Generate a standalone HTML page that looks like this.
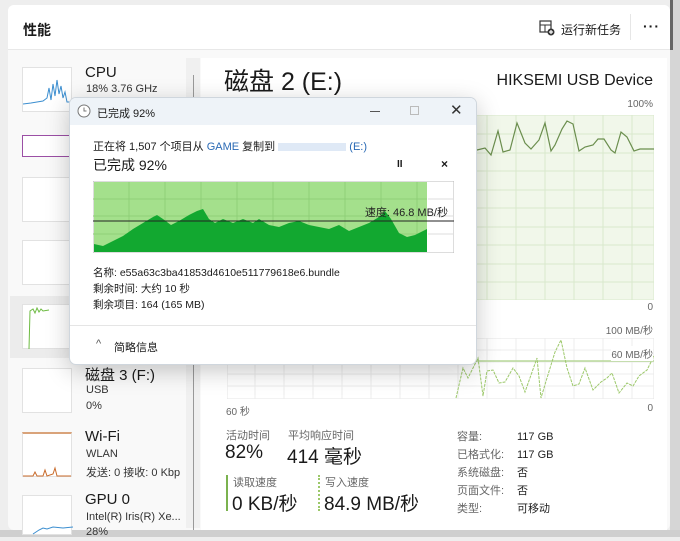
<!DOCTYPE html><html><head><meta charset="utf-8"><style>
*{margin:0;padding:0;box-sizing:border-box}
body{width:680px;height:537px;overflow:hidden;background:#eeeeee;font-family:"Liberation Sans","Noto Sans CJK SC",sans-serif;color:#1a1a1a;position:relative}
.a{position:absolute;white-space:nowrap}
.th{position:absolute;left:22px;width:50px;height:45px;border:1px solid #e2e2e2;background:#fff}
.s{font-size:11px;color:#333}
.g{color:#666;font-size:11px}
</style></head><body>
<div class="a" style="left:8px;top:5px;width:662px;height:525px;background:#f9f9f9;border-radius:6px"></div>
<div class="a" style="left:8px;top:5px;width:662px;height:45px;background:#fff;border-bottom:1px solid #e8e8e8;border-radius:6px 6px 0 0"></div>
<div class="a" style="left:23px;top:20px;font-size:14px;font-weight:bold">性能</div>
<svg class="a" style="left:539px;top:20px" width="16" height="16" viewBox="0 0 16 16"><rect x="1" y="1" width="11" height="11" fill="none" stroke="#333" stroke-width="1.2"/><line x1="1" y1="5" x2="12" y2="5" stroke="#333"/><line x1="6" y1="5" x2="6" y2="12" stroke="#333"/><circle cx="12" cy="12" r="3.5" fill="#333"/><path d="M12 10v4M10 12h4" stroke="#fff" stroke-width="1.2"/></svg>
<div class="a" style="left:561px;top:21px;font-size:12px">运行新任务</div>
<div class="a" style="left:630px;top:14px;width:1px;height:26px;background:#e6e6e6"></div>
<div class="a" style="left:643px;top:18px;font-size:14px;font-weight:bold;letter-spacing:1px">···</div>
<div class="a" style="left:670px;top:0;width:10px;height:537px;background:#d6d6d6"></div>
<div class="a" style="left:670px;top:0;width:3px;height:50px;background:#666"></div>
<div class="a" style="left:0;top:530px;width:680px;height:7px;background:#cfcfcf"></div>
<!-- sidebar -->
<div class="a" style="left:186px;top:58px;width:14px;height:470px;background:#f0f0f0"></div>
<div class="a" style="left:193px;top:75px;width:1px;height:455px;background:#999"></div>
<div class="a" style="left:10px;top:296px;width:175px;height:62px;background:#ececec"></div>
<div class="th" style="top:67px"><svg width="50" height="45"><path d="M0 36 L8 35 L14 34 L20 33 L24 30 L26 20 L28 32 L30 16 L32 28 L34 12 L36 26 L38 18 L40 30 L42 24 L44 34 L50 34" fill="none" stroke="#3b8ed0" stroke-width="1"/></svg></div>
<div class="a" style="left:85px;top:64px;font-size:15px">CPU</div>
<div class="a s" style="left:86px;top:83px">18% 3.76 GHz</div>
<div class="a" style="left:22px;top:135px;width:50px;height:22px;border:1px solid #9b4fa5;background:#fff"></div>
<div class="th" style="top:177px"></div>
<div class="th" style="top:240px"></div>
<div class="th" style="top:304px"><svg width="50" height="45"><path d="M6 44 L7 6 L10 4 L12 8 L14 3 L16 7 L18 4 L20 6 L26 5" fill="none" stroke="#6dbb42" stroke-width="1"/></svg></div>
<div class="th" style="top:368px"></div>
<div class="a" style="left:85px;top:364px;font-size:15px">磁盘 3 (F:)</div>
<div class="a s" style="left:86px;top:384px">USB</div>
<div class="a s" style="left:86px;top:400px">0%</div>
<div class="th" style="top:432px;border-top:2px solid #d9a37a"><svg width="50" height="45"><path d="M0 42 L10 42 L12 38 L14 42 L20 42 L22 36 L24 42 L30 40 L32 34 L34 42 L48 42" fill="none" stroke="#c86a2a" stroke-width="1"/></svg></div>
<div class="a" style="left:85px;top:428px;font-size:15px">Wi-Fi</div>
<div class="a s" style="left:86px;top:448px">WLAN</div>
<div class="a s" style="left:86px;top:464px">发送: 0 接收: 0 Kbp</div>
<div class="th" style="top:495px;height:40px"><svg width="50" height="40"><path d="M10 38 L16 34 L20 32 L24 33 L30 31 L40 32 L50 31" fill="none" stroke="#3b8ed0" stroke-width="1"/></svg></div>
<div class="a" style="left:85px;top:491px;font-size:15px">GPU 0</div>
<div class="a s" style="left:86px;top:511px">Intel(R) Iris(R) Xe...</div>
<div class="a s" style="left:86px;top:526px">28%</div>
<!-- main panel -->
<div class="a" style="left:201px;top:58px;width:466px;height:472px;background:#fff"></div>
<div class="a" style="left:224px;top:62px;font-size:25px">磁盘 2 (E:)</div>
<div class="a" style="right:27px;top:72px;font-size:16px">HIKSEMI USB Device</div>
<div class="a g" style="right:27px;top:99px;font-size:10px">100%</div>
<svg class="a" style="left:227px;top:115px" width="427" height="185">
<rect width="427" height="185" fill="#f1f7ea" stroke="#d9e8cc"/>
<g stroke="#d9e8cc" stroke-width="1">
<path d="M28 0V185M57 0V185M86 0V185M115 0V185M144 0V185M173 0V185M202 0V185M231 0V185M260 0V185M289 0V185M318 0V185M347 0V185M376 0V185M405 0V185"/>
<path d="M0 19H427M0 38H427M0 56H427M0 75H427M0 93H427M0 112H427M0 130H427M0 149H427M0 167H427"/></g>
<path d="M0 40 L250 35 L258 33 L264 40 L271 16 L276 37 L283 35 L290 8 L298 28 L304 34 L312 25 L318 8 L324 36 L328 30 L335 14 L340 6 L346 9 L352 36 L358 32 L366 30 L371 24 L377 24 L384 35 L388 38 L394 17 L400 22 L407 36 L413 34 L427 34" fill="none" stroke="#6b8e4e" stroke-width="1.2"/>
</svg>
<div class="a g" style="right:27px;top:302px;font-size:10px">0</div>
<div class="a g" style="right:27px;top:322px;font-size:10px">100 MB/秒</div>
<svg class="a" style="left:227px;top:338px" width="427" height="61">
<rect width="427" height="61" fill="#fff" stroke="#e4e4e4"/>
<g stroke="#ececec"><path d="M28 0V61M57 0V61M86 0V61M115 0V61M144 0V61M173 0V61M202 0V61M231 0V61M260 0V61M289 0V61M318 0V61M347 0V61M376 0V61M405 0V61M0 12H427M0 24H427M0 36H427M0 48H427"/></g>
<line x1="0" y1="23" x2="427" y2="23" stroke="#b8d89a" stroke-width="1.5"/>
<path d="M229 60 L236 30 L241 40 L248 26 L251 20 L256 58 L260 33 L266 32 L272 45 L278 44 L286 30 L292 38 L298 54 L310 20 L314 60 L320 40 L328 14 L334 2 L340 30 L346 48 L352 46 L358 30 L366 52 L374 44 L380 40 L385 35 L392 55 L400 45 L406 48 L412 38 L420 32 L427 18" fill="none" stroke="#9cc86a" stroke-width="1" stroke-dasharray="3,1"/>
</svg>
<div class="a g" style="right:27px;top:346px;font-size:10px;background:#fff">60 MB/秒</div>
<div class="a g" style="right:27px;top:403px;font-size:10px">0</div>
<div class="a g" style="left:226px;top:403px;font-size:10px">60 秒</div>
<div class="a g" style="left:226px;top:427px">活动时间</div>
<div class="a g" style="left:288px;top:427px">平均响应时间</div>
<div class="a" style="left:225px;top:442px;font-size:19px">82%</div>
<div class="a" style="left:287px;top:442px;font-size:19px">414 毫秒</div>
<div class="a" style="left:226px;top:475px;width:2px;height:36px;background:#7bb24f"></div>
<div class="a" style="left:318px;top:475px;width:0;height:36px;border-left:2px dotted #9cc86a"></div>
<div class="a g" style="left:233px;top:474px">读取速度</div>
<div class="a g" style="left:325px;top:474px">写入速度</div>
<div class="a" style="left:232px;top:489px;font-size:19px">0 KB/秒</div>
<div class="a" style="left:324px;top:489px;font-size:19px">84.9 MB/秒</div>
<div class="a g" style="left:457px;top:428px;line-height:18px">容量:<br>已格式化:<br>系统磁盘:<br>页面文件:<br>类型:</div>
<div class="a s" style="left:517px;top:428px;line-height:18px;color:#222">117 GB<br>117 GB<br>否<br>否<br>可移动</div>
<!-- dialog -->
<div class="a" style="left:69px;top:97px;width:408px;height:268px;background:#fff;border:1px solid #cfd6dd;border-radius:7px;box-shadow:0 6px 24px rgba(0,0,0,.22);overflow:hidden">
<div class="a" style="left:0;top:0;width:408px;height:27px;background:#eef3f8"></div>
<svg class="a" style="left:7px;top:6px" width="14" height="14"><circle cx="7" cy="7" r="6" fill="#fff" stroke="#777"/><path d="M7 3.5V7H9.5" fill="none" stroke="#777"/></svg>
<div class="a" style="left:27px;top:7px;font-size:11px">已完成 92%</div>
<div class="a" style="left:300px;top:13px;width:10px;height:1px;background:#555"></div>
<div class="a" style="left:340px;top:8px;width:9px;height:9px;border:1px solid #bbb"></div>
<div class="a" style="left:380px;top:3px;font-size:15px;color:#333">✕</div>
<div class="a" style="left:23px;top:40px;font-size:11px">正在将 1,507 个项目从 <span style="color:#2a6ab5">GAME</span> 复制到 <span style="display:inline-block;width:68px;height:8px;background:#dfe9f6;vertical-align:middle"></span> <span style="color:#2a6ab5">(E:)</span></div>
<div class="a" style="left:23px;top:57px;font-size:14px">已完成 92%</div>
<div class="a" style="left:327px;top:61px;font-size:10px;font-weight:bold">II</div>
<div class="a" style="left:371px;top:59px;font-size:12px;font-weight:bold">×</div>
<svg class="a" style="left:23px;top:83px" width="361" height="72">
<rect width="361" height="72" fill="#fff" stroke="#bbb"/>
<rect x="1" y="1" width="333" height="70" fill="#a4e08c"/>
<g stroke="#8fcf78"><path d="M36 1V71M72 1V71M108 1V71M144 1V71M180 1V71M216 1V71M252 1V71M288 1V71M324 1V71M0 18H334M0 35H334M0 53H334"/></g>
<g stroke="#ddd"><path d="M335 18H360M335 35H360M335 53H360"/></g>
<path d="M1 71 L1 63 L10 65 L20 60 L30 55 L40 48 L50 42 L60 36 L64 34 L70 38 L78 44 L86 40 L96 34 L104 30 L110 28 L116 38 L122 42 L130 38 L140 42 L150 38 L160 42 L166 38 L176 44 L186 46 L196 42 L206 40 L216 44 L226 46 L236 48 L246 44 L256 50 L266 46 L276 42 L286 36 L292 30 L298 38 L306 52 L314 56 L322 54 L334 48 L334 71 Z" fill="#12a830"/>
<line x1="0" y1="40" x2="361" y2="40" stroke="#222"/>
<text x="355" y="35" text-anchor="end" font-size="11" fill="#222" font-family="Liberation Sans,Noto Sans CJK SC,sans-serif">速度: 46.8 MB/秒</text>
</svg>
<div class="a" style="left:23px;top:167px;font-size:10.5px;line-height:16px">名称: e55a63c3ba41853d4610e511779618e6.bundle<br>剩余时间: 大约 10 秒<br>剩余项目: 164 (165 MB)</div>
<div class="a" style="left:0;top:227px;width:408px;height:1px;background:#e5e5e5"></div>
<div class="a" style="left:26px;top:240px;font-size:11px;color:#555">^</div>
<div class="a" style="left:44px;top:241px;font-size:11px">简略信息</div>
</div>
</body></html>
